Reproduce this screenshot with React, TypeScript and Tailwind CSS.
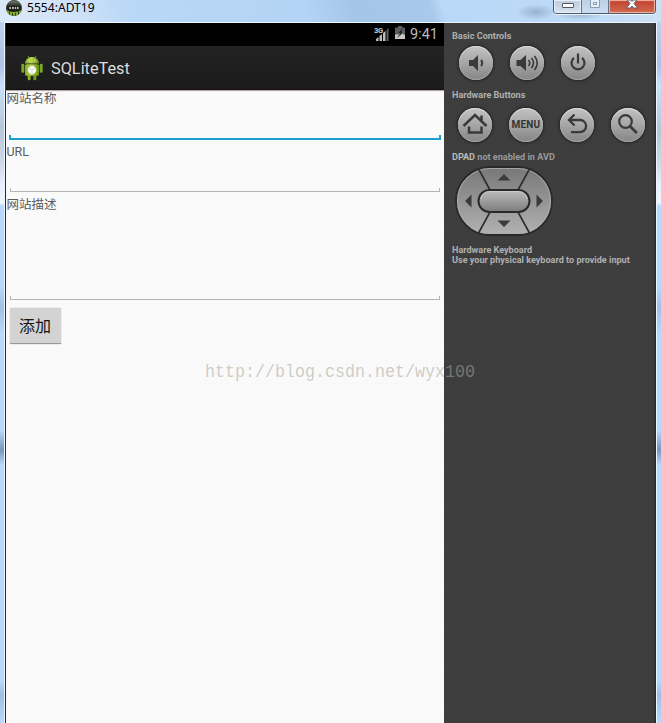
import type { ReactNode } from "react";

function RoundButton({ label, children }: { label: string; children: ReactNode }) {
  return (
    <button
      aria-label={label}
      className="flex h-[34px] w-[34px] shrink-0 items-center justify-center rounded-full bg-linear-to-b from-[#c2c2c2] via-[#a6a6a6] to-[#858585] shadow-[0_0_0_1px_#2c2c2c,0_0_3px_1px_#252525,inset_0_1px_1px_#dddddd,inset_0_-1px_1px_#a5a5a5]"
    >
      {children}
    </button>
  );
}

function Glyph({ children }: { children: ReactNode }) {
  return (
    <svg width="34" height="34" viewBox="0 0 34 34" fill="none" stroke="#3a3a3a" strokeWidth="2">
      {children}
    </svg>
  );
}

function DroidBadge() {
  return (
    <svg width="17" height="17" viewBox="0 0 17 17" className="shrink-0">
      <defs>
        <linearGradient id="badge" x1="0" y1="0" x2="0" y2="1">
          <stop offset="0" stopColor="#7d837a" />
          <stop offset="0.4" stopColor="#20251c" />
          <stop offset="1" stopColor="#141812" />
        </linearGradient>
      </defs>
      <circle cx="8" cy="8" r="7.600" fill="url(#badge)" stroke="#2c3727" strokeWidth="0.8" />
      <path d="M0.800 9.500Q2 12 8 12T15.200 9.500Q14.500 15.600 8 15.600Q1.500 15.600 0.800 9.500Z" fill="#86b32e" />
      <path d="M3.500 12v2.500M6.500 12.800v2.500M9.500 12.800v2.500M12.500 12v2.500" stroke="#2c3b16" />
      <path d="M3.300 8h1.600M6 8h1.800M8.800 8h1.400M11 8h1.600" stroke="#f4f4f4" strokeWidth="1.600" />
    </svg>
  );
}

function Droid() {
  return (
    <svg width="22" height="26" viewBox="0 0 22 26" className="shrink-0">
      <defs>
        <linearGradient id="droid" x1="0" x2="1">
          <stop offset="0" stopColor="#86ae20" />
          <stop offset="0.450" stopColor="#b8d84e" />
          <stop offset="1" stopColor="#648c12" />
        </linearGradient>
      </defs>
      <path d="M7 1l1.500 2.500M15 1l-1.500 2.500" stroke="#7fa527" strokeWidth="0.900" />
      <path d="M4 8.500C4.300 4.500 7 2 11 2s6.700 2.500 7 6.500z" fill="url(#droid)" />
      <circle cx="8" cy="5.800" r="0.700" fill="#f0f5d8" />
      <circle cx="14" cy="5.800" r="0.700" fill="#f0f5d8" />
      <rect x="4" y="9.300" width="14" height="11.400" rx="1.500" fill="url(#droid)" />
      <rect x="0.300" y="8.800" width="3" height="9" rx="1.400" fill="#7da526" />
      <rect x="18.700" y="8.800" width="3" height="9" rx="1.400" fill="#7da526" />
      <rect x="6.700" y="20" width="3" height="5.200" rx="1.300" fill="#89b126" />
      <rect x="12.300" y="20" width="3" height="5.200" rx="1.300" fill="#719b1c" />
      <circle cx="11" cy="15" r="4.400" fill="#d9e4bb" />
      <path d="M11 11.500l3.500 1.500v4l-3.500 1.700-3.500-1.700v-4z" fill="#fff" />
      <path d="M8 13.300l3 1.400 3-1.400M11 14.700v3.500" fill="none" stroke="#c5ccb6" strokeWidth="0.800" />
    </svg>
  );
}

function DPad() {
  return (
    <svg width="98" height="70" viewBox="0 0 98 70" className="block">
      <defs>
        <linearGradient id="pad" x1="0" y1="0" x2="0" y2="1">
          <stop offset="0" stopColor="#777" />
          <stop offset="1" stopColor="#b2b2b2" />
        </linearGradient>
        <linearGradient id="key" x1="0" y1="0" x2="0" y2="1">
          <stop offset="0" stopColor="#bdbdbd" />
          <stop offset="1" stopColor="#7c7c7c" />
        </linearGradient>
      </defs>
      <rect x="1" y="1" width="96" height="68" rx="34" fill="url(#pad)" stroke="#292929" strokeWidth="1.800" />
      <rect x="2.500" y="2.500" width="93" height="65" rx="32.500" fill="none" stroke="#b0b0b0" strokeWidth="0.800" />
      <path d="M23 2l12 22M75 2L63 24M23 68l12-22M75 68L63 46" stroke="#2c2c2c" strokeWidth="1.600" />
      <rect x="23.500" y="24" width="51" height="22" rx="11" fill="url(#key)" stroke="#292929" strokeWidth="2" />
      <path d="M26 33q1-7 8-7.500h30q7 .5 8 7.500" fill="none" stroke="#d0d0d0" strokeWidth="0.800" />
      <path d="M42.500 14.500L49 8l6.500 6.500zM42.500 54.500L49 61l6.500-6.500zM16.500 28.500L10 35l6.500 6.500zM81.500 28.500L88 35l-6.500 6.500z" fill="#3b3b3b" />
    </svg>
  );
}

function Field({ label, height, top, focused }: { label: string; height: string; top: string; focused?: boolean }) {
  return (
    <label className={"flex flex-col " + height}>
      <span className={"pl-[0.5px] text-[12.5px] leading-[17px] text-[#5a5a5a] " + top}>{label}</span>
      <span
        className={
          focused
            ? "mt-auto ml-[3px] mr-[3px] h-[5px] border-x-2 border-b-2 border-[#1ba0cd]"
            : "mt-auto mr-[4px] ml-[4px] h-[4px] border-x border-b border-[#b4b4b4]"
        }
      />
    </label>
  );
}

function Phone() {
  return (
    <main className="flex w-[438px] shrink-0 flex-col bg-[#fafafa] bg-[linear-gradient(#f8f8f8_1px,transparent_1px),linear-gradient(90deg,#f8f8f8_1px,transparent_1px)] bg-[size:10px_10px]">
      <div className="flex h-[23px] shrink-0 items-center justify-end bg-black pr-[6px] text-[#bbbbbb]">
        <svg width="16" height="17" viewBox="0 0 16 17" className="-mt-[2px] mr-px">
          <path d="M2 16v-2l2.500-2v4zM5.500 16v-5l2.500-2v7zM9 16V8l2.500-2v10z" fill="#bdbdbd" />
          <path d="M12.500 16V5l2-2v13z" fill="#606060" />
          <text x="0" y="7.500" fontSize="7.500" fontFamily="Roboto, sans-serif" fontWeight="700" fill="#ccc" textLength="9">3G</text>
        </svg>
        <svg width="10" height="15" viewBox="0 0 10 15" className="-mt-[4px] ml-[4px]">
          <path d="M0 2.500h3V1h4v1.500h3V14H0z" fill="#5c5c5c" />
          <path d="M0 9.500h10V14H0z" fill="#c7c7c7" />
          <path d="M7.500 3.500L3.500 8h2.500L2 12.500 8 11V9.500L6.500 7z" fill="#1d1d1d" />
          <path d="M2.500 12.500L8 8v5H2.500z" fill="#c7c7c7" />
        </svg>
        <span className="mt-[2px] ml-[5px] text-[14.5px] leading-none">9:41</span>
      </div>
      <header className="flex h-[44px] shrink-0 items-center border-b border-[#111] bg-linear-to-b from-[#232323] to-[#1b1b1b] pl-[15px] shadow-[0_1px_1px_#b8a8aa]">
        <Droid />
        <h1 className="mt-[4px] ml-[8px] text-[16.3px] leading-none text-[#dcdcdc]">SQLiteTest</h1>
      </header>
      <form className="flex flex-col">
        <Field label="网站名称" height="h-[50px]" top="mt-0" focused />
        <Field label="URL" height="h-[52px]" top="mt-[3px]" />
        <Field label="网站描述" height="h-[108px]" top="mt-[4px]" />
        <button
          type="button"
          className="mt-[8px] ml-[4px] h-[36px] w-[51px] border-b border-[#999] bg-[#d3d3d3] pt-[2px] pr-px text-[16px] leading-none text-[#141414] shadow-[0_0_1px_#aaa]"
        >
          添加
        </button>
      </form>
    </main>
  );
}

function Controls() {
  return (
    <aside className="flex w-[211px] shrink-0 flex-col border-r border-[#333] bg-[#3e3e3e] bg-[linear-gradient(#3d3d3d_1px,transparent_1px),linear-gradient(90deg,#3d3d3d_1px,transparent_1px)] bg-[size:4px_4px] pl-[8px] text-[9.080px] leading-[10px] font-bold text-[#b0b0b0]">
      <h2 className="mt-[8px]">Basic Controls</h2>
      <div className="mt-[5px] ml-[7px] flex gap-[17px]">
        <RoundButton label="Volume down">
          <Glyph>
            <path d="M10 14h4l5-5v16l-5-5h-4z" fill="#3a3a3a" stroke="none" />
            <path d="M22 14q2.500 3 0 6" />
          </Glyph>
        </RoundButton>
        <RoundButton label="Volume up">
          <Glyph>
            <path d="M6.500 14h4l5.500-5v16l-5.500-5h-4z" fill="#3a3a3a" stroke="none" />
            <path d="M18.500 14q2.500 3 0 6M21.500 12q4 5 0 10M24.500 10q5.500 7 0 14" strokeWidth="1.600" />
          </Glyph>
        </RoundButton>
        <RoundButton label="Power">
          <Glyph>
            <path d="M13 11.800a6.500 6.500 0 1 0 8 0M17 7.500v10" strokeWidth="2.200" />
          </Glyph>
        </RoundButton>
      </div>
      <h2 className="mt-[10px]">Hardware Buttons</h2>
      <div className="mt-[8px] ml-[6px] flex gap-[17px]">
        <RoundButton label="Home">
          <Glyph>
            <path d="M5.500 18L17 7 28.500 18M23.500 13V7.500M11 18.500v6h12.500v-6" strokeWidth="2.500" />
          </Glyph>
        </RoundButton>
        <RoundButton label="Menu">
          <span className="text-[10px] leading-none font-bold tracking-[0.2px] text-[#343434]">MENU</span>
        </RoundButton>
        <RoundButton label="Back">
          <Glyph>
            <path d="M14.500 6.500L9 12l5.500 5.500M9.500 12H20a6 6 0 0 1 0 12.200h-9" strokeWidth="2.300" />
          </Glyph>
        </RoundButton>
        <RoundButton label="Search">
          <Glyph>
            <circle cx="14.500" cy="13.500" r="6.300" strokeWidth="2.200" />
            <path d="M18.800 18l7 7" strokeWidth="2.700" />
          </Glyph>
        </RoundButton>
      </div>
      <p className="mt-[10px] text-[#999]">
        <span className="text-[#bbb]">DPAD</span> not enabled in AVD
      </p>
      <div className="mt-[4px] ml-[3px]">
        <DPad />
      </div>
      <p className="mt-[9px] whitespace-nowrap">
        Hardware Keyboard
        <br />
        Use your physical keyboard to provide input
      </p>
    </aside>
  );
}

export default function App() {
  return (
    <div className="relative flex h-[723px] w-[661px] flex-col overflow-hidden bg-[linear-gradient(180deg,#c5dcf5_0px,#b8cde9_35px,#afc1e6_65px,#c9e1fc_85px,#b6c5d8_130px,#d1dbe8_165px,#e7f1fc_185px,#eff6ff_203px,#b7d9ff_206px,#b7d9ff_285px,#a1c0e8_307px,#b7d9ff_335px,#b7d9ff_430px,#7896bc_450px,#b7d9ff_465px,#b7d9ff_680px,#9ebee5_695px,#b7d9ff_723px)] font-['Roboto','Noto_Sans_CJK_SC',sans-serif]">
      <div className="flex h-[22px] shrink-0 items-start bg-[radial-gradient(ellipse_20px_8px_at_536px_12px,#8fa9c6cc,transparent),radial-gradient(ellipse_24px_5px_at_580px_15px,#8da8c5aa,transparent),linear-gradient(70deg,#dce9f7_0%,#cfe2f7_12%,#b9d7f7_20%,#b4d4f5_46%,#a3c5e8_54%,#a8c9ec_65%,#b9d8f7_67%,#bddaf7_85%,#cce1f5)] pl-[6px]">
        <DroidBadge />
        <span className="ml-[4px] font-['Noto_Sans','Noto_Sans_CJK_SC',sans-serif] text-[12.1px] leading-[15px] text-black">5554:ADT19</span>
        <div className="ml-auto mr-[5px] flex h-[14px] w-[103px] overflow-hidden rounded-b-[4px] border-x border-b border-[#4f596b] bg-[#b5c8dd] shadow-[0_1px_0_#edf6ff]">
          <div className="flex w-[28px] justify-center border-r border-[#66758a] bg-linear-to-b from-[#bcc9db] to-[#d9e3f0] pt-[3px] shadow-[inset_0_0_1px_1px_#e9f2fc]">
            <span className="h-[5px] w-[12px] rounded-[1px] border border-[#545966] bg-white" />
          </div>
          <div className="flex w-[27px] justify-center border-r border-[#66758a] bg-linear-to-b from-[#bed0e5] to-[#cadef3]">
            <svg width="12" height="9" viewBox="0 0 12 9" fill="none" stroke="#8c9db1">
              <path d="M1.500 0v7.500h9V0" fill="#e4eef9" />
              <rect x="4.500" y="2.500" width="3" height="2" />
            </svg>
          </div>
          <div className="flex flex-1 justify-center bg-linear-to-b from-[#c3402c] to-[#d06a50] shadow-[inset_0_0_1px_1px_#efb8a8]">
            <svg width="14" height="10" viewBox="0 0 14 10">
              <path d="M2 0l3 3.500L1.500 8h4L7 6l1.500 2h4L9 3.500 12 0H8.500L7 1.500 5.500 0z" fill="#fff" stroke="#525667" strokeWidth="0.900" />
            </svg>
          </div>
        </div>
      </div>
      <div className="ml-[4px] flex w-[653px] flex-1 border-x border-t border-[#edf6ff]">
        <div className="flex w-[651px] border-x border-[#252c38]">
          <Phone />
          <Controls />
        </div>
      </div>
      <span className="absolute top-[361px] left-[205px] scale-y-115 font-['Liberation_Mono',monospace] text-[16.67px] leading-[22px] whitespace-nowrap text-[#a6a699]/55">
        http://blog.csdn.net/wyx100
      </span>
    </div>
  );
}
